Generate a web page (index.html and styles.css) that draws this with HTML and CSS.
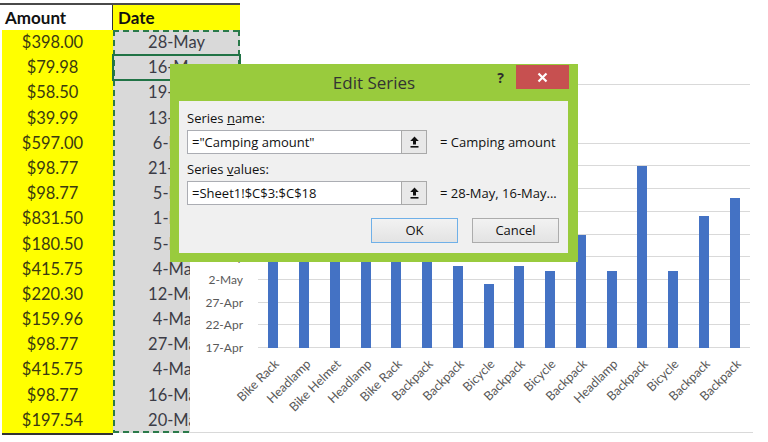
FILE: index.html
```html
<!DOCTYPE html>
<html lang="en">
  <head>
    <meta charset="UTF-8" />
    <title>Edit Series</title>
    <link rel="stylesheet" href="styles.css">
  </head>
  <body>
    <!-- worksheet columns -->
    <div class="sheet">
      <div class="col amount">
        <div class="head">Amount</div>
        <div class="cells">
          <div class="cell">$398.00</div>
          <div class="cell">$79.98</div>
          <div class="cell">$58.50</div>
          <div class="cell">$39.99</div>
          <div class="cell">$597.00</div>
          <div class="cell">$98.77</div>
          <div class="cell">$98.77</div>
          <div class="cell">$831.50</div>
          <div class="cell">$180.50</div>
          <div class="cell">$415.75</div>
          <div class="cell">$220.30</div>
          <div class="cell">$159.96</div>
          <div class="cell">$98.77</div>
          <div class="cell">$415.75</div>
          <div class="cell">$98.77</div>
          <div class="cell">$197.54</div>
        </div>
      </div>
      <div class="col date">
        <div class="head">Date</div>
        <div class="cells">
          <div class="cell">28-May</div>
          <div class="cell active">16-May</div>
          <div class="cell">19-May</div>
          <div class="cell">13-May</div>
          <div class="cell">6-May</div>
          <div class="cell">21-May</div>
          <div class="cell">5-May</div>
          <div class="cell">1-May</div>
          <div class="cell">5-May</div>
          <div class="cell">4-May</div>
          <div class="cell">12-May</div>
          <div class="cell">4-May</div>
          <div class="cell">27-May</div>
          <div class="cell">4-May</div>
          <div class="cell">16-May</div>
          <div class="cell">20-May</div>
        </div>
      </div>
    </div>

    <!-- chart floating on the sheet -->
    <div class="chart">
      <div class="plot">
        <div class="grid" style="bottom: 0px"></div>
        <div class="grid" style="bottom: 22.7px"></div>
        <div class="grid" style="bottom: 45.4px"></div>
        <div class="grid" style="bottom: 68.1px"></div>
        <div class="grid" style="bottom: 90.8px"></div>
        <div class="grid" style="bottom: 113.5px"></div>
        <div class="grid" style="bottom: 136.2px"></div>
        <div class="grid" style="bottom: 158.9px"></div>
        <div class="grid" style="bottom: 181.6px"></div>
        <div class="grid" style="bottom: 204.3px"></div>
        <div class="grid" style="bottom: 263px"></div>

        <!-- the upper axis labels sit under the dialog -->
        <span class="ylab" style="bottom: 0px">17-Apr</span>
        <span class="ylab" style="bottom: 22.7px">22-Apr</span>
        <span class="ylab" style="bottom: 45.4px">27-Apr</span>
        <span class="ylab" style="bottom: 68.1px">2-May</span>
        <span class="ylab" style="bottom: 90.8px">7-May</span>

        <div class="slot"><div class="bar" style="height: 186px"></div><span class="cat">Bike Rack</span></div>
        <div class="slot"><div class="bar" style="height: 132px"></div><span class="cat">Headlamp</span></div>
        <div class="slot"><div class="bar" style="height: 145px"></div><span class="cat">Bike Helmet</span></div>
        <div class="slot"><div class="bar" style="height: 118px"></div><span class="cat">Headlamp</span></div>
        <div class="slot"><div class="bar" style="height: 86px"></div><span class="cat">Bike Rack</span></div>
        <div class="slot"><div class="bar" style="height: 154px"></div><span class="cat">Backpack</span></div>
        <div class="slot"><div class="bar" style="height: 82px"></div><span class="cat">Backpack</span></div>
        <div class="slot"><div class="bar" style="height: 64px"></div><span class="cat">Bicycle</span></div>
        <div class="slot"><div class="bar" style="height: 82px"></div><span class="cat">Backpack</span></div>
        <div class="slot"><div class="bar" style="height: 77px"></div><span class="cat">Bicycle</span></div>
        <div class="slot"><div class="bar" style="height: 113px"></div><span class="cat">Backpack</span></div>
        <div class="slot"><div class="bar" style="height: 77px"></div><span class="cat">Headlamp</span></div>
        <div class="slot"><div class="bar" style="height: 182px"></div><span class="cat">Backpack</span></div>
        <div class="slot"><div class="bar" style="height: 77px"></div><span class="cat">Bicycle</span></div>
        <div class="slot"><div class="bar" style="height: 132px"></div><span class="cat">Backpack</span></div>
        <div class="slot"><div class="bar" style="height: 150px"></div><span class="cat">Backpack</span></div>
      </div>
    </div>

    <!-- Edit Series dialog -->
    <div class="dialog">
      <div class="titlebar">
        <span></span>
        <span class="title">Edit Series</span>
        <div class="controls">
          <span class="help">?</span>
          <span class="close">
            <svg width="11" height="11" viewBox="0 0 11 11">
              <path d="M1.5 1.5 L9.5 9.5 M9.5 1.5 L1.5 9.5" stroke="#fff" stroke-width="2.2" />
            </svg>
          </span>
        </div>
      </div>
      <div class="client">
        <div class="label">Series <u>n</u>ame:</div>
        <div class="row">
          <div class="field">
            <div class="text">="Camping amount"</div>
            <div class="pick">
              <svg width="9" height="12" viewBox="0 0 9 12">
                <path d="M4.5 0.5 L8.8 5 H6 V8.5 H3 V5 H0.2 Z" fill="#111" />
                <rect x="0.5" y="10" width="8" height="1.6" fill="#111" />
              </svg>
            </div>
          </div>
          <span class="value">= Camping amount</span>
        </div>
        <div class="label second">Series <u>v</u>alues:</div>
        <div class="row">
          <div class="field">
            <div class="text">=Sheet1!$C$3:$C$18</div>
            <div class="pick">
              <svg width="9" height="12" viewBox="0 0 9 12">
                <path d="M4.5 0.5 L8.8 5 H6 V8.5 H3 V5 H0.2 Z" fill="#111" />
                <rect x="0.5" y="10" width="8" height="1.6" fill="#111" />
              </svg>
            </div>
          </div>
          <span class="value">= 28-May, 16-May...</span>
        </div>
        <div class="buttons">
          <div class="btn ok">OK</div>
          <div class="btn">Cancel</div>
        </div>
      </div>
    </div>
  </body>
</html>
```

FILE: styles.css
```css
body {
  margin: 0;
  padding: 0;
  background-color: #fff;
  font-family: "Lato", "Liberation Sans", sans-serif;
}

/* worksheet */
.sheet {
  display: flex;
  width: 240px;
  margin-top: 3px;
  padding-left: 2px;
  box-sizing: border-box;
  border-top: 2px solid #4a4a4a;
}

.amount {
  width: 111px;
}

.date {
  width: 127px;
}

.head {
  height: 25px;
  line-height: 25px;
  font-size: 17px;
  font-weight: bold;
  color: #111;
  box-sizing: border-box;
}

.amount .head {
  padding-left: 3px;
  border-right: 1px solid #333;
}

.date .head {
  padding-left: 5px;
  background-color: #ff0;
}

.cell {
  height: 25.2px;
  line-height: 25.2px;
  font-size: 16.5px;
  text-align: center;
  white-space: nowrap;
  overflow: hidden;
}

.amount .cells {
  background-color: #ff0;
  border-bottom: 2px solid #333;
  color: #3a3a10;
}

.amount .cell {
  padding-right: 10px;
}

.date .cells {
  background-color: #d9d9d9;
  color: #3c3c46;
  background-image:
    repeating-linear-gradient(90deg, #2a7a4a 0 6px, transparent 6px 10px),
    repeating-linear-gradient(90deg, #2a7a4a 0 6px, transparent 6px 10px),
    repeating-linear-gradient(180deg, #2a7a4a 0 6px, transparent 6px 10px),
    repeating-linear-gradient(180deg, #2a7a4a 0 6px, transparent 6px 10px);
  background-size: 100% 2px, 100% 2px, 2px 100%, 2px 100%;
  background-position: top, bottom, left, right;
  background-repeat: no-repeat;
}

.date .active {
  position: relative;
  outline: 2px solid #217346;
  outline-offset: -1px;
}

/* chart */
.chart {
  position: absolute;
  left: 190px;
  top: 70px;
  width: 563px;
  height: 362px;
  background-color: #fff;
  border-bottom: 1px solid #d9d9d9;
}

.plot {
  position: relative;
  display: flex;
  align-items: flex-end;
  width: 492px;
  height: 264px;
  margin: 14px 0 0 68px;
}

.grid {
  position: absolute;
  left: 0;
  right: 0;
  height: 1px;
  background-color: #d9d9d9;
}

.ylab {
  position: absolute;
  right: calc(100% + 15px);
  transform: translateY(50%);
  font-size: 12px;
  line-height: 14px;
  color: #595959;
  white-space: nowrap;
}

.slot {
  position: relative;
  flex: 1;
  display: flex;
  justify-content: center;
}

.bar {
  width: 10px;
  background-color: #4472c4;
}

.cat {
  position: absolute;
  top: calc(100% + 9px);
  right: calc(50% + 1px);
  transform-origin: 100% 0;
  transform: rotate(-45deg);
  font-size: 12.5px;
  line-height: 14px;
  color: #595959;
  white-space: nowrap;
}

/* dialog */
.dialog {
  position: absolute;
  left: 170px;
  top: 64px;
  width: 408px;
  height: 198px;
  padding: 0 10px 9px 9px;
  box-sizing: border-box;
  display: flex;
  flex-direction: column;
  background-color: #99cb3d;
  font-family: "Open Sans", "Noto Sans", sans-serif;
  font-size: 13px;
  color: #111;
}

.titlebar {
  height: 37px;
  display: grid;
  grid-template-columns: 1fr auto 1fr;
  align-items: center;
  margin-right: -1px;
}

.title {
  font-size: 17px;
  color: #333;
}

.controls {
  align-self: start;
  justify-self: end;
  display: flex;
  align-items: center;
  margin-top: 1px;
}

.help {
  margin-right: 12px;
  font-size: 14px;
  font-weight: bold;
  color: #2d2d2d;
}

.close {
  width: 53px;
  height: 24px;
  display: flex;
  align-items: center;
  justify-content: center;
  background-color: #c75050;
}

.client {
  flex: 1;
  padding: 9px 9px 10px 8px;
  background-color: #f0f0f0;
}

.label {
  line-height: 17px;
  margin-bottom: 3px;
}

.label.second {
  margin-top: 7px;
}

.row {
  display: flex;
  align-items: center;
}

.field {
  display: flex;
  width: 240px;
  height: 24px;
}

.text {
  flex: 1;
  padding-left: 4px;
  line-height: 22px;
  background-color: #fff;
  border: 1px solid #abadb3;
  border-right: none;
}

.pick {
  width: 26px;
  display: flex;
  align-items: center;
  justify-content: center;
  box-sizing: border-box;
  background-color: #e8e8e8;
  border: 1px solid #a9a9a9;
}

.value {
  margin-left: 13px;
  white-space: nowrap;
}

.buttons {
  display: flex;
  justify-content: flex-end;
  gap: 14px;
  margin-top: 13px;
}

.btn {
  width: 87px;
  height: 25px;
  box-sizing: border-box;
  line-height: 23px;
  text-align: center;
  border: 1px solid #acacac;
  background: linear-gradient(#f2f2f2, #e3e3e3);
}

.btn.ok {
  border-color: #6fb0e8;
}
```
